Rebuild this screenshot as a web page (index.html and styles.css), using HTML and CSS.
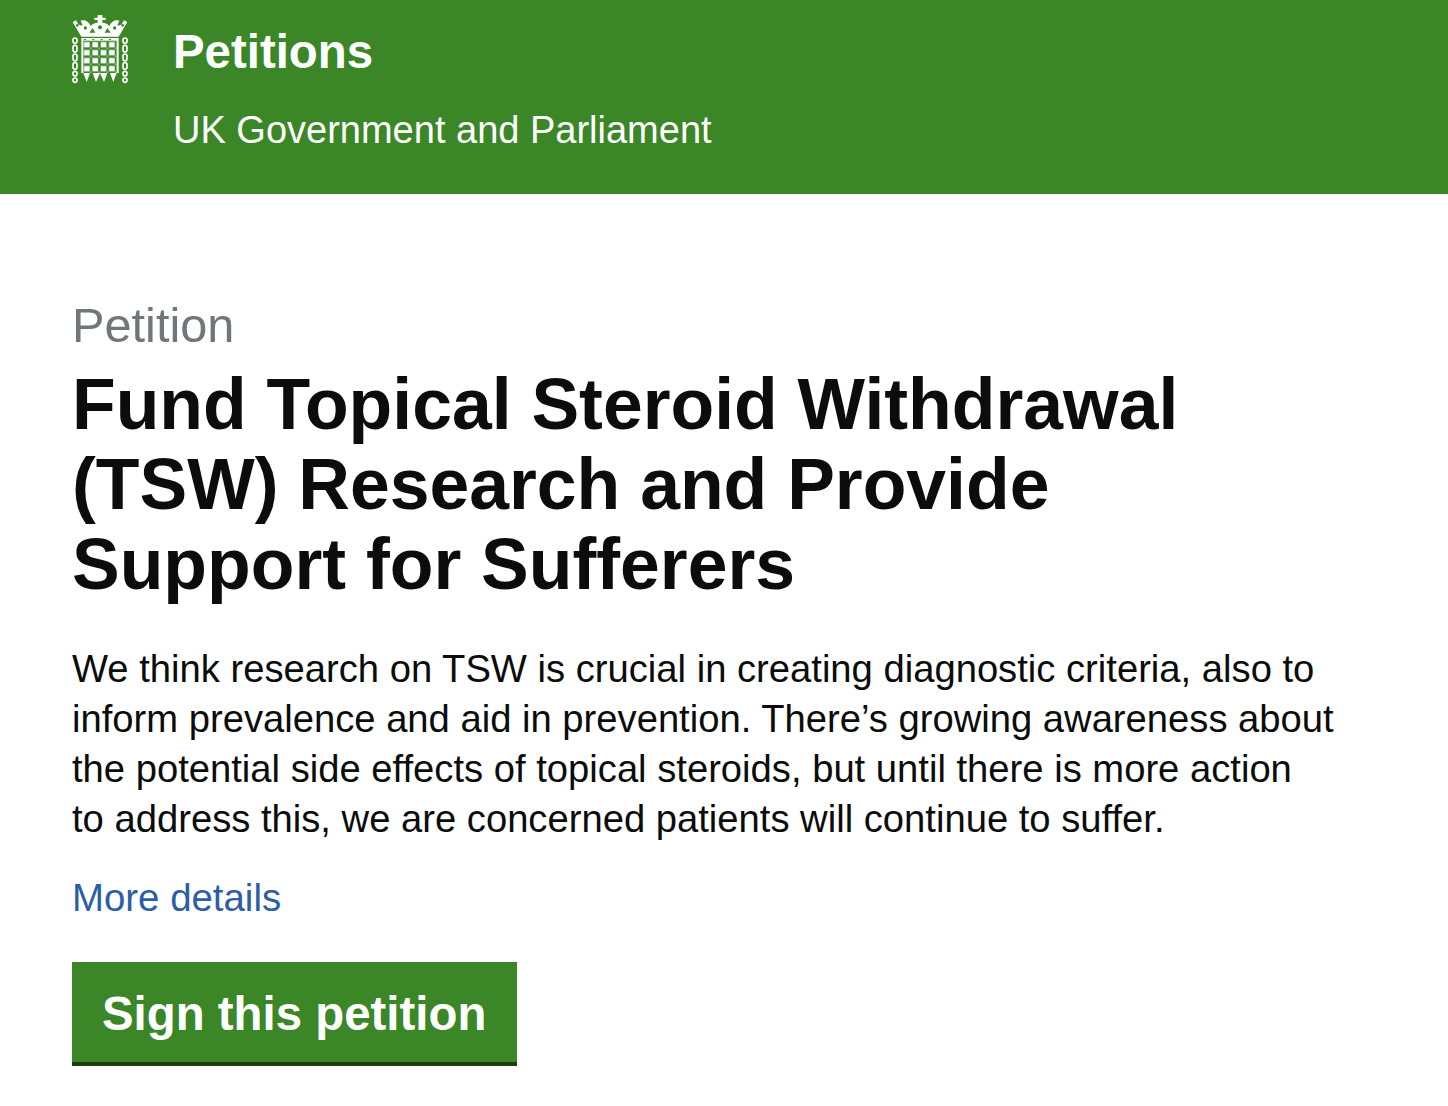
FILE: index.html
```html
<!DOCTYPE html>
<html lang="en">
<head>
<meta charset="utf-8">
<title>Petitions</title>
<link rel="stylesheet" href="styles.css">
</head>
<body>
<header class="site-header">
  <svg class="crest" viewBox="30 25 180 225" aria-hidden="true">
    <defs>
      <pattern id="lattice" x="70" y="110" width="25" height="24" patternUnits="userSpaceOnUse">
        <rect width="25" height="24" fill="#3b8626"/>
        <rect x="2" y="2" width="17" height="16" fill="#fff"/>
        <rect x="20.5" y="19.5" width="3.5" height="3.5" fill="#fff"/>
      </pattern>
    </defs>
    <g fill="#fff">
      <path d="M64 96 L38 52 L48 47 C54 60 60 65 68 62 L62 48 C74 44 86 50 92 64 C98 56 106 54 113 54 L113 46 L103 46 L103 39 L113 39 L113 31 L127 31 L127 39 L137 39 L137 46 L127 46 L127 54 C134 54 142 56 148 64 C154 50 166 44 178 48 L172 62 C180 65 186 60 192 47 L202 52 L176 96 Z"/>
      <path d="M64 100 H176 V205 H170 L160 232 L150 205 H142 L132 232 L120 205 L108 232 L98 205 H90 L80 232 L70 205 H64 Z"/>
    </g>
    <rect x="70" y="108" width="100" height="97" fill="url(#lattice)"/>
    <g fill="#3b8626">
      <circle cx="52" cy="62" r="4"/><circle cx="76" cy="70" r="5"/><circle cx="120" cy="68" r="6"/><circle cx="164" cy="70" r="5"/><circle cx="188" cy="62" r="4"/>
      <path d="M88 84 L98 70 L106 84 Z M134 84 L142 70 L152 84 Z"/>
      <rect x="72" y="103" width="6" height="3"/><rect x="97" y="103" width="6" height="3"/><rect x="122" y="103" width="6" height="3"/><rect x="147" y="103" width="6" height="3"/>
    </g>
    <g fill="none" stroke="#fff" stroke-width="5">
      <rect x="39" y="100" width="12" height="16" rx="6"/><rect x="39" y="122" width="12" height="20" rx="6"/><rect x="39" y="148" width="12" height="20" rx="6"/><rect x="39" y="174" width="12" height="20" rx="6"/><rect x="39" y="200" width="12" height="14" rx="6"/><rect x="39" y="220" width="12" height="13" rx="6"/>
      <rect x="189" y="100" width="12" height="16" rx="6"/><rect x="189" y="122" width="12" height="20" rx="6"/><rect x="189" y="148" width="12" height="20" rx="6"/><rect x="189" y="174" width="12" height="20" rx="6"/><rect x="189" y="200" width="12" height="14" rx="6"/><rect x="189" y="220" width="12" height="13" rx="6"/>
    </g>
  </svg>
  <div class="brand">
    <a class="brand-title" href="#">Petitions</a>
    <p class="brand-sub">UK Government and Parliament</p>
  </div>
</header>
<main class="content">
  <p class="eyebrow">Petition</p>
  <h1 class="title">Fund Topical Steroid Withdrawal (TSW) Research and Provide Support for Sufferers</h1>
  <p class="summary">We think research on TSW is crucial in creating diagnostic criteria, also to inform prevalence and aid in prevention. There’s growing awareness about the potential side effects of topical steroids, but until there is more action<br>to address this, we are concerned patients will continue to suffer.</p>
  <a class="details" href="#">More details</a>
  <a class="sign" href="#">Sign this petition</a>
</main>
</body>
</html>
```
FILE: styles.css
```css
* { box-sizing: border-box; }
html, body { margin: 0; padding: 0; }
body { background: #fff; color: #0b0c0c; font-family: "Liberation Sans", Arial, sans-serif; }
.site-header {
  background: #3b8626;
  height: 194px;
  display: flex;
  align-items: flex-start;
  padding: 13px 0 0 70px;
  gap: 43px;
}
.crest { flex: none; width: 60px; height: 75px; }
.brand-title {
  display: block;
  color: #fff;
  font-size: 47.4px;
  font-weight: 700;
  line-height: 56px;
  margin-top: 11px;
  text-decoration: none;
}
.brand-sub {
  margin: 28px 0 0;
  color: #fff;
  font-size: 38px;
  line-height: 44px;
}
.content { padding: 103px 72px 0; display: flex; flex-direction: column; align-items: flex-start; }
.eyebrow { margin: 0; color: #6f777b; font-size: 48.7px; line-height: 56px; }
.title {
  margin: 11px 0 0;
  font-size: 71.5px;
  line-height: 80px;
  font-weight: 700;
  max-width: 1200px;
}
.summary {
  margin: 40px 0 0;
  font-size: 38.2px;
  line-height: 50px;
  max-width: 1290px;
}
.details { margin-top: 29px; color: #2b5ea7; font-size: 38.4px; line-height: 50px; text-decoration: none; }
.sign {
  margin-top: 39px;
  background: #3b8626;
  border-bottom: 4px solid #1a3f0c;
  color: #fff;
  font-size: 47.4px;
  font-weight: 700;
  line-height: 56px;
  padding: 24px 31px 20px 30px;
  text-decoration: none;
}
```
